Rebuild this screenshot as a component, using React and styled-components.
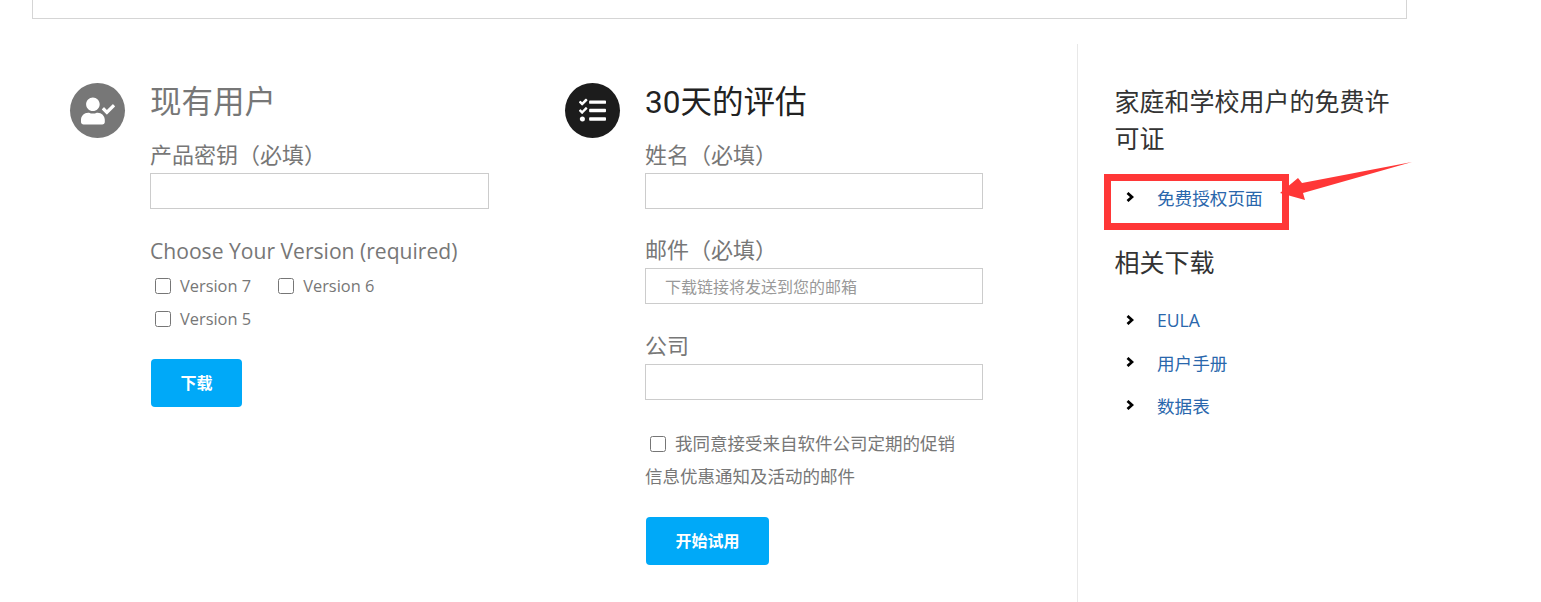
import React from 'react';
import styled, { createGlobalStyle } from 'styled-components';
import { FaUserCheck, FaTasks } from 'react-icons/fa';

const FONT = '"Open Sans", "Noto Sans CJK SC", sans-serif';

const GlobalStyle = createGlobalStyle`
    html, body {
        margin: 0;
        padding: 0;
        background: #fff;
        overflow: hidden;
    }
    body {
        font-family: ${FONT};
    }
`

const Page = styled.div`
    position: relative;
    height: 602px;
    overflow: hidden;
`

const TopPanel = styled.div`
    box-sizing: border-box;
    width: 1375px;
    height: 19px;
    margin-left: 32px;
    border: 1px solid #d5d5d5;
    border-top: none;
`

const Content = styled.div`
    display: flex;
    margin-top: 25px;
    height: 558px;
`

const Section = styled.section`
    display: flex;
    box-sizing: border-box;
    width: ${(p) => p.$width}px;
    padding: 39px 0 0 ${(p) => p.$left}px;
`

const IconCircle = styled.div`
    display: flex;
    flex: none;
    align-items: center;
    justify-content: center;
    width: 55px;
    height: 55px;
    margin-right: 25px;
    border-radius: 50%;
    color: #fff;
    background: ${(p) => p.$bg};
    font-size: ${(p) => p.$size}px;
`

const FormBody = styled.div`
    width: ${(p) => p.$width}px;
`

const Title = styled.h2`
    margin: 0 0 18.6px;
    height: 38px;
    font-family: "Roboto", "Noto Sans CJK SC", sans-serif;
    font-size: 31.5px;
    font-weight: 400;
    line-height: 40px;
    color: ${(p) => p.$color};
`

const Field = styled.div`
    margin-bottom: 26.5px;
`

const Label = styled.label`
    display: block;
    height: 30px;
    margin-bottom: ${(p) => (p.$latin ? 4 : 3)}px;
    font-size: ${(p) => (p.$latin ? 21.1 : 22)}px;
    line-height: ${(p) => (p.$latin ? 32 : 28)}px;
    color: #777;
`

const TextInput = styled.input`
    display: block;
    box-sizing: border-box;
    width: 100%;
    height: 36px;
    padding: 1px 19px 0;
    border: 1px solid #ccc;
    outline: none;
    font-family: ${FONT};
    font-size: 16px;
    &::placeholder {
        color: #999;
        opacity: 1;
    }
`

const CheckRow = styled.div`
    display: flex;
    gap: 27px;
    height: 33px;
    margin-left: 5px;
    align-items: center;
`

const CheckLabel = styled.label`
    display: flex;
    align-items: center;
    font-size: 16.4px;
    color: #777;
`

const Check = styled.input`
    width: 16px;
    height: 16px;
    margin: 0 9px 0 0;
`

const Agree = styled.div`
    width: 320px;
    margin: 27px 0 24px;
    font-size: 17.5px;
    line-height: 33px;
    color: #777;
`

const AgreeCheck = styled(Check)`
    margin: 0 9px 0 5px;
    vertical-align: -2px;
`

const Button = styled.button`
    display: block;
    width: ${(p) => p.$width}px;
    height: 48px;
    margin: ${(p) => p.$top || 0}px 0 0 1px;
    padding: 0 0 2px;
    border: none;
    border-radius: 4px;
    background: #00a9f8;
    color: #fff;
    font-family: "Noto Sans CJK SC", sans-serif;
    font-size: 16px;
    font-weight: 700;
`

const Sidebar = styled.aside`
    box-sizing: border-box;
    width: 330px;
    padding: 39px 0 0 36.5px;
    border-left: 1px solid #e8e8e8;
`

const SideTitle = styled.h3`
    margin: 0;
    width: 285px;
    font-size: 25px;
    font-weight: 400;
    line-height: 37px;
    color: #333;
`

const LinkList = styled.ul`
    margin: ${(p) => p.$top}px 0 ${(p) => p.$bottom}px;
    padding: 0 0 0 11.5px;
    list-style: none;
`

const LinkItem = styled.li`
    display: flex;
    align-items: center;
    height: 42.5px;
    font-size: 17.6px;
`

const ChevronIcon = styled.svg`
    flex: none;
    width: 8px;
    height: 10px;
    margin: -1px 23px 0 0;
`

const SideLink = styled.a`
    color: #2a67ac;
    text-decoration: none;
`

const Highlight = styled.div`
    position: absolute;
    left: 1104px;
    top: 174px;
    box-sizing: border-box;
    width: 185px;
    height: 56px;
    border: 7px solid #ff3737;
`

const ArrowMark = styled.svg`
    position: absolute;
    left: 1270px;
    top: 150px;
`

const Chevron = () => (
    <ChevronIcon viewBox="0 0 8 10">
        <polyline points="1.5,1 6,5 1.5,9" fill="none" stroke="#000" strokeWidth="2.8" />
    </ChevronIcon>
);

const App = () => {
    return (
        <Page>
            <GlobalStyle />
            <TopPanel />
            <Content>
                <Section $width={565} $left={70}>
                    <IconCircle $bg="#777" $size={34}>
                        <FaUserCheck />
                    </IconCircle>
                    <FormBody $width={339}>
                        <Title $color="#777">现有用户</Title>
                        <Field>
                            <Label>产品密钥（必填）</Label>
                            <TextInput />
                        </Field>
                        <Label $latin>Choose Your Version (required)</Label>
                        <CheckRow>
                            <CheckLabel><Check type="checkbox" />Version 7</CheckLabel>
                            <CheckLabel><Check type="checkbox" />Version 6</CheckLabel>
                        </CheckRow>
                        <CheckRow>
                            <CheckLabel><Check type="checkbox" />Version 5</CheckLabel>
                        </CheckRow>
                        <Button $width={91} $top={23.5}>下载</Button>
                    </FormBody>
                </Section>
                <Section $width={512} $left={0}>
                    <IconCircle $bg="#1c1c1c" $size={27}>
                        <FaTasks />
                    </IconCircle>
                    <FormBody $width={338}>
                        <Title $color="#222">30天的评估</Title>
                        <Field>
                            <Label>姓名（必填）</Label>
                            <TextInput />
                        </Field>
                        <Field>
                            <Label>邮件（必填）</Label>
                            <TextInput placeholder="下载链接将发送到您的邮箱" />
                        </Field>
                        <Field>
                            <Label>公司</Label>
                            <TextInput />
                        </Field>
                        <Agree>
                            <AgreeCheck type="checkbox" />
                            我同意接受来自软件公司定期的促销信息优惠通知及活动的邮件
                        </Agree>
                        <Button $width={123}>开始试用</Button>
                    </FormBody>
                </Section>
                <Sidebar>
                    <SideTitle>家庭和学校用户的免费许可证</SideTitle>
                    <LinkList $top={19} $bottom={25}>
                        <LinkItem><Chevron /><SideLink>免费授权页面</SideLink></LinkItem>
                    </LinkList>
                    <SideTitle>相关下载</SideTitle>
                    <LinkList $top={18.5} $bottom={0}>
                        <LinkItem><Chevron /><SideLink>EULA</SideLink></LinkItem>
                        <LinkItem><Chevron /><SideLink>用户手册</SideLink></LinkItem>
                        <LinkItem><Chevron /><SideLink>数据表</SideLink></LinkItem>
                    </LinkList>
                </Sidebar>
            </Content>
            <Highlight />
            <ArrowMark width="145" height="55" viewBox="0 0 145 55">
                <polygon points="10,43 28,28 32,33 142,12 33,43 35,50" fill="#ff3737" />
            </ArrowMark>
        </Page>
    );
};

export default App;
